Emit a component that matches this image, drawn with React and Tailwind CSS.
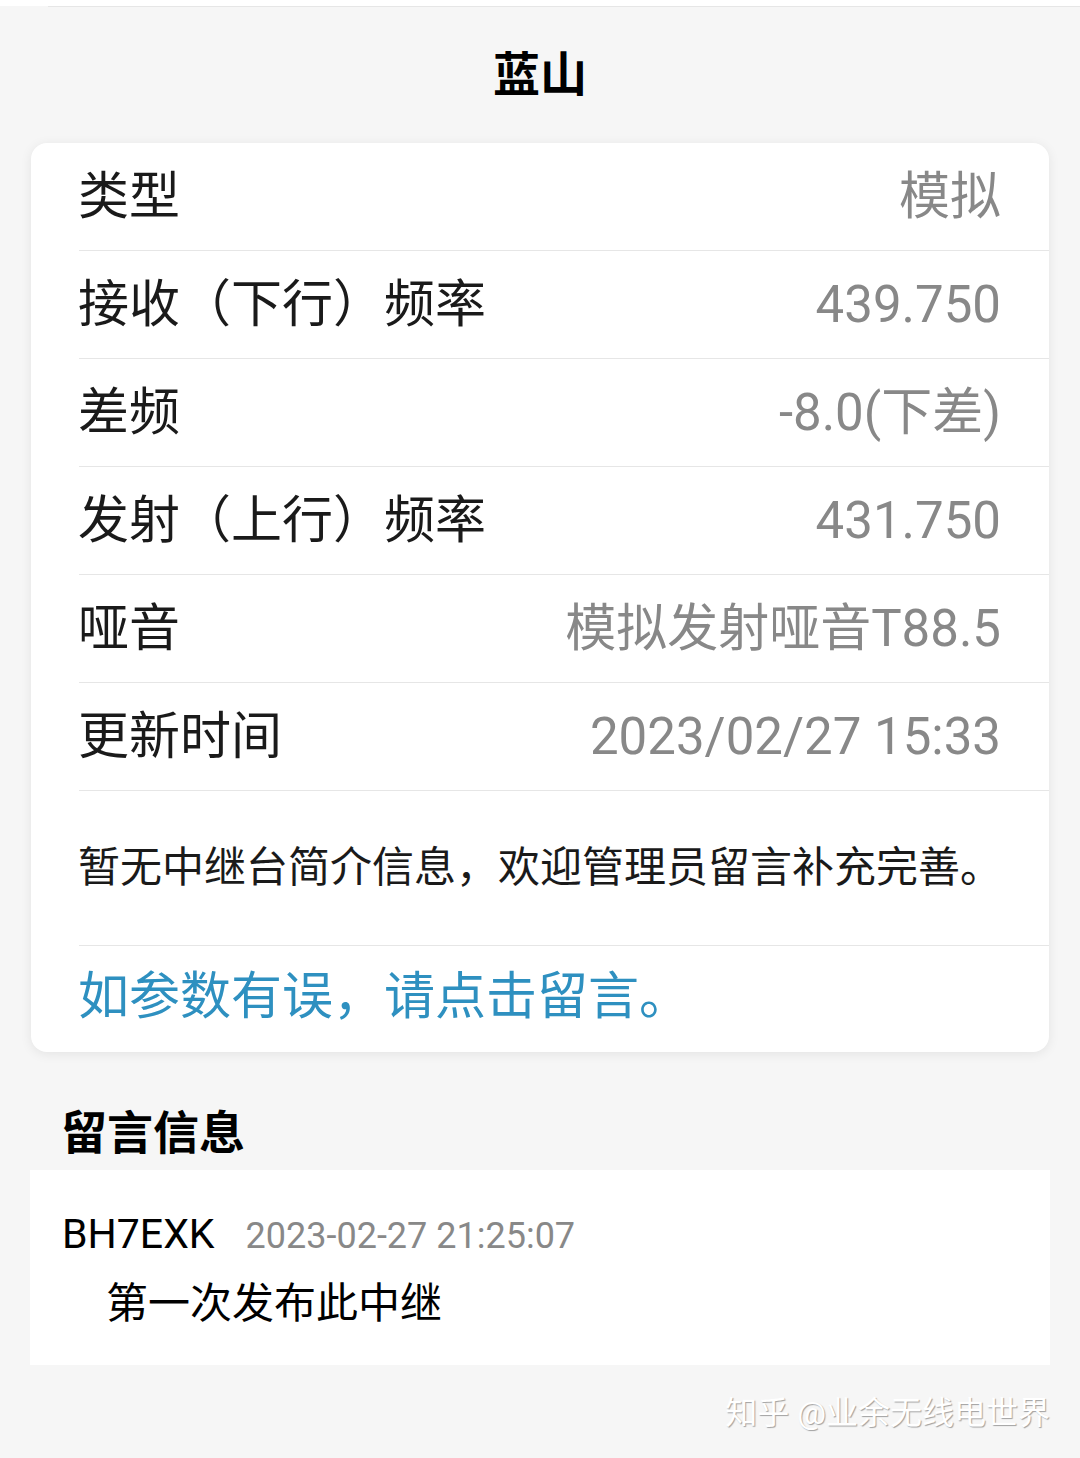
const rows = [
  { label: '类型', value: '模拟' },
  { label: '接收（下行）频率', value: '439.750' },
  { label: '差频', value: '-8.0(下差)' },
  { label: '发射（上行）频率', value: '431.750' },
  { label: '哑音', value: '模拟发射哑音T88.5' },
  { label: '更新时间', value: '2023/02/27 15:33' },
];

const font = { fontFamily: 'Roboto, "Noto Sans CJK SC", sans-serif' };

export default function App() {
  return (
    <div className="min-h-[1458px] bg-[#f6f6f6] text-[#1a1a1a]" style={font}>
      <div className="h-[6px] bg-white" />
      <div className="ml-[48px] h-px bg-[#e6e6e6]" />

      <h1 className="h-[136px] flex items-center justify-center text-[47px] font-bold text-black leading-none pb-[2px]">
        蓝山
      </h1>

      <div className="mx-[31px] bg-white rounded-[16px] shadow-[0_2px_12px_rgba(0,0,0,0.08)] overflow-hidden">
        {rows.map((r) => (
          <div key={r.label}>
            <div className="h-[107px] flex items-center justify-between pl-[47px] pr-[48px]">
              <span className="text-[51px] leading-none">{r.label}</span>
              <span className="text-[51px] leading-none text-[#888888]">{r.value}</span>
            </div>
            <div className="ml-[48px] h-px bg-[#e6e6e6]" />
          </div>
        ))}
        <div className="h-[154px] flex items-center pl-[47px]">
          <span className="text-[42px] leading-none">暂无中继台简介信息，欢迎管理员留言补充完善。</span>
        </div>
        <div className="ml-[48px] h-px bg-[#e6e6e6]" />
        <div className="h-[106px] flex items-center pl-[47px] pb-[6px]">
          <span className="text-[51px] leading-none text-[#2e90c0]">如参数有误，请点击留言。</span>
        </div>
      </div>

      <h2 className="mt-[58px] pl-[61px] text-[46px] font-bold leading-none text-black">留言信息</h2>

      <div className="mt-[14px] mx-[30px] bg-white h-[195px] pt-[44px]">
        <div className="flex items-baseline pl-[32px]">
          <span className="text-[41px] leading-none text-black">BH7EXK</span>
          <span className="ml-[31px] text-[36px] leading-none text-[#888888]">2023-02-27 21:25:07</span>
        </div>
        <div className="mt-[28px] pl-[76px] text-[42px] leading-none text-black">第一次发布此中继</div>
      </div>

      <div className="flex justify-end pr-[30px] mt-[32px]">
        <span className="text-[32px] leading-none text-white [text-shadow:1px_1px_1px_rgba(0,0,0,0.35)]">知乎 @业余无线电世界</span>
      </div>
    </div>
  );
}
